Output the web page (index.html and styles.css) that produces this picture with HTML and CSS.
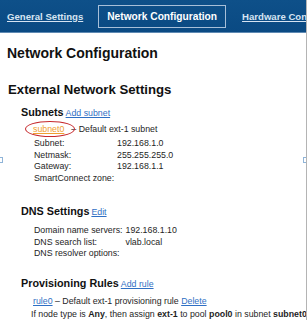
FILE: index.html
```html
<!DOCTYPE html>
<html>
<head>
<meta charset="utf-8">
<link rel="stylesheet" href="styles.css">
</head>
<body>
<div class="frame">
  <header class="topbar">
    <a class="tab" href="#">General Settings</a>
    <span class="tab tab-active">Network Configuration</span>
    <a class="tab" href="#">Hardware Configuration</a>
  </header>
  <main class="content">
    <h1 class="page-title">Network Configuration</h1>
    <h2 class="section-title">External Network Settings</h2>

    <section class="group">
      <h3 class="group-title">Subnets <a class="link" href="#">Add subnet</a></h3>
      <div class="item-line"><span class="circled"><a class="link-orange" href="#">subnet0</a></span>– Default ext-1 subnet</div>
      <dl class="props props-subnet">
        <dt>Subnet:</dt><dd>192.168.1.0</dd>
        <dt>Netmask:</dt><dd>255.255.255.0</dd>
        <dt>Gateway:</dt><dd>192.168.1.1</dd>
        <dt>SmartConnect zone:</dt><dd></dd>
      </dl>
    </section>

    <section class="group group-dns">
      <h3 class="group-title">DNS Settings <a class="link" href="#">Edit</a></h3>
      <dl class="props props-dns">
        <dt>Domain name servers:</dt><dd>192.168.1.10</dd>
        <dt>DNS search list:</dt><dd>vlab.local</dd>
        <dt>DNS resolver options:</dt><dd></dd>
      </dl>
    </section>

    <section class="group group-rules">
      <h3 class="group-title">Provisioning Rules <a class="link" href="#">Add rule</a></h3>
      <div class="item-line item-rule"><a class="link" href="#">rule0</a> – Default ext-1 provisioning rule <a class="link" href="#">Delete</a></div>
      <div class="rule-desc">If node type is <b>Any</b>, then assign <b>ext-1</b> to pool <b>pool0</b> in subnet <b>subnet0</b></div>
    </section>
  </main>
  <span class="handle handle-left"></span>
  <span class="handle handle-right"></span>
</div>
</body>
</html>
```

FILE: styles.css
```css
html, body {
  margin: 0;
  padding: 0;
  background: #ffffff;
}

body {
  font-family: "Liberation Sans", Arial, sans-serif;
  font-size: 8.8px;
  color: #1e1e1e;
  overflow: hidden;
}

.frame {
  position: relative;
  width: 306px;
  height: 320px;
  border-right: 1px solid #b4b4b4;
  overflow: hidden;
}

.topbar {
  height: 32px;
  border-bottom: 1px solid #5f8ab3;
  background: linear-gradient(#0e5089, #0a4a83);
  display: flex;
  align-items: center;
  gap: 15px;
  padding-left: 7px;
  white-space: nowrap;
  overflow: hidden;
}

.tab {
  font-weight: bold;
  font-size: 9.6px;
  color: #d6e4f2;
  text-decoration: underline;
  flex: none;
}

.tab-active {
  font-size: 10.2px;
  color: #ffffff;
  text-decoration: none;
  border: 1px solid #a7bfd8;
  height: 21px;
  line-height: 21px;
  padding: 0 8px;
  margin-right: 1px;
}

.content {
  padding-left: 7px;
}

.page-title {
  font-size: 14px;
  font-weight: bold;
  line-height: 16px;
  margin: 12px 0 0;
  color: #111;
}

.section-title {
  font-size: 13.2px;
  font-weight: bold;
  line-height: 16px;
  margin: 21px 0 0 1px;
  color: #111;
}

.group {
  padding-left: 14px;
}

.group-title {
  font-size: 10.8px;
  font-weight: bold;
  line-height: 13px;
  margin: 8px 0 0;
  color: #111;
}

.group-dns .group-title {
  margin-top: 20px;
}

.group-rules .group-title {
  margin-top: 17px;
}

.link {
  color: #2f6fc4;
  text-decoration: underline;
  font-weight: normal;
  font-size: 8.8px;
}

.group-title .link {
  margin-left: -1px;
}

.link-orange {
  color: #f0a030;
  text-decoration: underline;
}

.item-line {
  line-height: 12px;
  margin-top: 3px;
  padding-left: 12px;
  white-space: nowrap;
}

.item-rule {
  margin-top: 4px;
}

.circled {
  position: relative;
  margin-right: 7px;
}

.circled::after {
  content: "";
  position: absolute;
  left: -8px;
  right: -11px;
  top: -3px;
  bottom: -3px;
  border: 1.5px solid #c62a2e;
  border-radius: 50%;
}

.props {
  display: grid;
  margin: 0;
  padding-left: 13px;
  line-height: 11.7px;
}

.props dt, .props dd {
  margin: 0;
  white-space: nowrap;
}

.props-subnet {
  grid-template-columns: 83px 1fr;
  margin-top: 3px;
}

.props-dns {
  grid-template-columns: auto 1fr;
  column-gap: 3px;
  margin-top: 6px;
  justify-content: start;
}

.rule-desc {
  line-height: 12px;
  margin-top: 1px;
  padding-left: 10px;
  white-space: nowrap;
}

.rule-desc b {
  font-weight: bold;
}

.handle {
  position: absolute;
  width: 4px;
  height: 4px;
  border: 1px solid #8fb4d8;
  background: #ffffff;
  top: 157px;
}

.handle-left {
  left: -3px;
}

.handle-right {
  right: -3px;
}
```
